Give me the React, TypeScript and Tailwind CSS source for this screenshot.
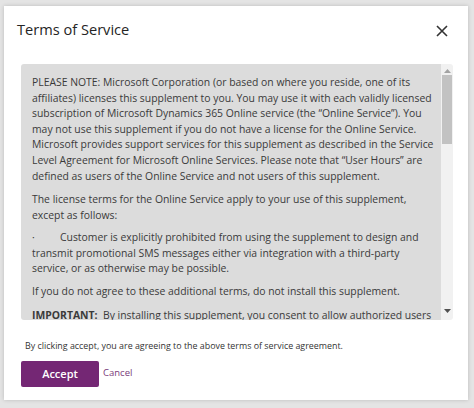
const FONT = { fontFamily: '"Open Sans", "Noto Sans", sans-serif' };

const intro = [
  "PLEASE NOTE: Microsoft Corporation (or based on where you reside, one of its",
  "affiliates) licenses this supplement to you. You may use it with each validly licensed",
  "subscription of Microsoft Dynamics 365 Online service (the \u201cOnline Service\u201d). You",
  "may not use this supplement if you do not have a license for the Online Service.",
  "Microsoft provides support services for this supplement as described in the Service",
  "Level Agreement for Microsoft Online Services. Please note that \u201cUser Hours\u201d are",
  "defined as users of the Online Service and not users of this supplement.",
];

function Lines({ lines }: { lines: string[] }) {
  return (
    <>
      {lines.map((l) => (
        <span key={l} className="block whitespace-nowrap">
          {l}
        </span>
      ))}
    </>
  );
}

function CloseIcon() {
  return (
    <svg width="12" height="12" viewBox="0 0 12 12" className="text-[#333]">
      <path d="M1 1 L11 11 M11 1 L1 11" stroke="currentColor" strokeWidth="1.6" />
    </svg>
  );
}

function FakeScrollbar() {
  return (
    <div className="flex w-[12px] flex-col items-center bg-[#f1f1f1] pt-[5px]">
      <svg width="7" height="4" viewBox="0 0 7 4">
        <path d="M0 4 L3.5 0 L7 4 Z" fill="#a3a3a3" />
      </svg>
      <div className="mt-[2px] h-[69px] w-[10px] bg-[#c2c2c2]" />
      <div className="flex-1" />
      <svg width="7" height="4" viewBox="0 0 7 4" className="mb-[7px]">
        <path d="M0 0 L7 0 L3.5 4 Z" fill="#505050" />
      </svg>
    </div>
  );
}

export default function App() {
  return (
    <div className="h-[408px] w-[474px] bg-[#e4e4e4] pl-[4px] pt-[6px]" style={FONT}>
      <div className="flex h-[394px] w-[464px] flex-col bg-white shadow-[0_0_4px_rgba(0,0,0,0.18)]">
        <div className="flex items-center justify-between pl-[13px] pr-[20px] pt-[14px]">
          <h2 className="text-[14.6px] leading-[18px] text-[#252525]">Terms of Service</h2>
          <div className="mt-[3px]">
            <CloseIcon />
          </div>
        </div>

        <div className="ml-[17px] mt-[26px] flex h-[256px] w-[432px] overflow-hidden rounded-[3px]">
          <div className="flex-1 overflow-hidden bg-[#dcdcdc] pl-[11px] pt-[11px] text-[10.4px] leading-[15.6px] text-[#3a3a3a]">
            <p>
              <Lines lines={intro} />
            </p>
            <p className="mt-[7.8px]">
              <Lines
                lines={[
                  "The license terms for the Online Service apply to your use of this supplement,",
                  "except as follows:",
                ]}
              />
            </p>
            <p className="mt-[7px]">
              <span className="block whitespace-nowrap">
                <span className="inline-block w-[28px]">·</span>
                Customer is explicitly prohibited from using the supplement to design and
              </span>
              <Lines
                lines={[
                  "transmit promotional SMS messages either via integration with a third-party",
                  "service, or as otherwise may be possible.",
                ]}
              />
            </p>
            <p className="mt-[7px] whitespace-nowrap">
              If you do not agree to these additional terms, do not install this supplement.
            </p>
            <p className="mt-[8px] whitespace-nowrap">
              <b className="font-bold">IMPORTANT:</b>&nbsp; By installing this supplement, you consent to allow authorized users
            </p>
          </div>
          <FakeScrollbar />
        </div>

        <p className="ml-[21px] mt-[20px] text-[8.9px] leading-[12px] text-[#333]">
          By clicking accept, you are agreeing to the above terms of service agreement.
        </p>

        <div className="ml-[17px] mt-[9px] flex items-center gap-[4px]">
          <button className="h-[26px] w-[78px] rounded-[2px] bg-[#742774] text-[11px] font-semibold text-white">
            Accept
          </button>
          <span className="mb-[2px] text-[9.5px] text-[#7a3b7a]">Cancel</span>
        </div>
      </div>
    </div>
  );
}
